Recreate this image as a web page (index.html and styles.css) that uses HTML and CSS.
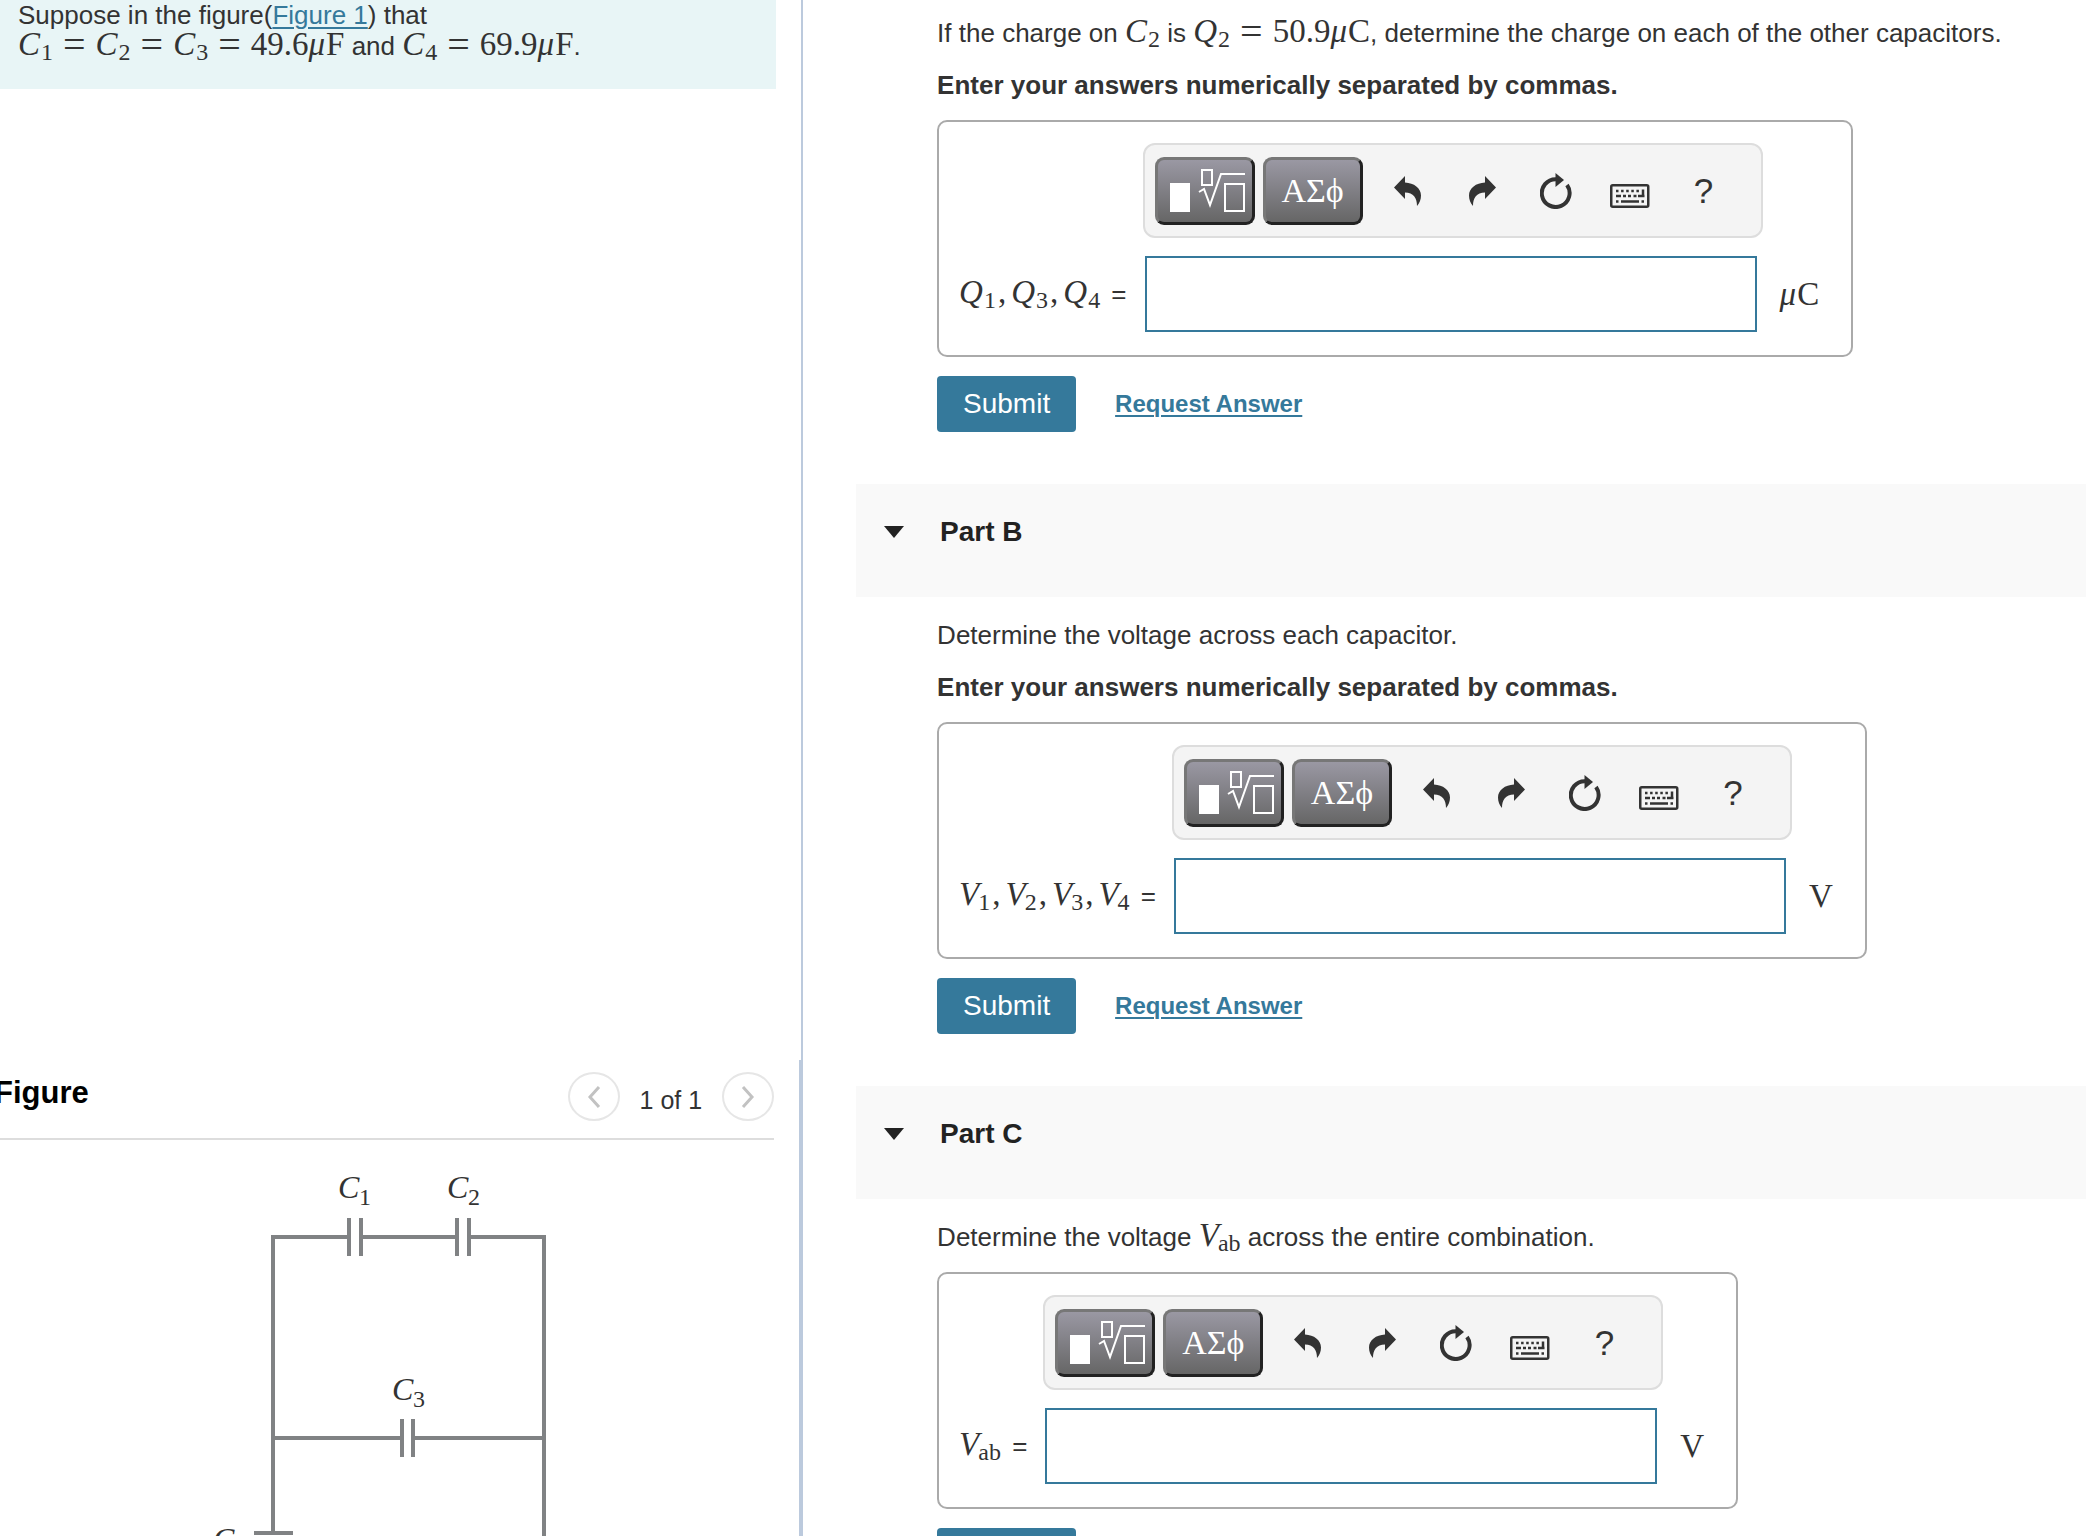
FILE: index.html
```html
<!DOCTYPE html>
<html lang="en">
<head>
<meta charset="utf-8">
<title>Capacitor combination</title>
<link rel="stylesheet" href="styles.css">
</head>
<body>
<svg class="sprite" aria-hidden="true">
  <symbol id="root" viewBox="0 0 76 44">
    <path d="M0 14h20v29H0z" fill="#fff"/>
    <path d="M32 1h10v15H32zM55 15h19v27H55z" fill="none" stroke="#fff" stroke-width="2"/>
    <path d="M29 23l5-3 6 16L51 5h24" fill="none" stroke="#fff" stroke-width="2"/>
  </symbol>
  <symbol id="undo" viewBox="0 0 28 30">
    <path d="M0 11.500L11 0v6.500c9 .5 16 5.500 16 13 0 4-1.500 7.500-4 10.500 0-8-3.500-13.500-12-13.500V23z"/>
  </symbol>
  <symbol id="redo" viewBox="0 0 28 30">
    <path d="M28 11.500L17 0v6.500C8 7 1 12 1 19.500 1 23.500 2.500 27 5 30c0-8 3.500-13.500 12-13.500V23z"/>
  </symbol>
  <symbol id="reset" viewBox="0 0 32 36">
    <path d="M27 12A13.900 13.900 0 1 1 16 6.200" fill="none" stroke="#333" stroke-width="4"/>
    <path d="M15.500 0v14L24 7z"/>
  </symbol>
  <symbol id="keyboard" viewBox="0 0 40 24">
    <rect x="1.250" y="1.250" width="37" height="21.500" rx="1.500" fill="#f4f4f4" stroke="#333" stroke-width="2.500"/>
    <path d="M6 7h23" stroke="#333" stroke-width="2.500" stroke-dasharray="2.500 2.600"/>
    <path d="M6 12h5M13 12h3M18 12h3M23.500 12h3M28 12h6.500M33 5.500V13M6 17.500h2.500M11 17.500h18M31.500 17.500H34" fill="none" stroke="#333" stroke-width="2.500"/>
  </symbol>
</svg>

<div class="page">
  <aside class="left">
    <section class="intro">
      <p class="given">Suppose in the figure(<a href="#figure">Figure 1</a>) that<br>
        <span class="m"><i>C</i><sub>1</sub><b>=</b><i>C</i><sub>2</sub><b>=</b><i>C</i><sub>3</sub><b>=</b>49.6<i>μ</i>F</span> and <span class="m"><i>C</i><sub>4</sub><b>=</b>69.9<i>μ</i>F</span>.</p>
    </section>
    <section class="figure" id="figure">
      <header class="figure-head">
        <h2>Figure</h2>
        <nav class="pager">
          <button type="button" aria-label="Previous figure"><svg viewBox="0 0 14 24"><path d="M12 2L3 12l9 10"/></svg></button>
          <span>1 of 1</span>
          <button type="button" aria-label="Next figure"><svg viewBox="0 0 14 24"><path d="M2 2l9 10-9 10"/></svg></button>
        </nav>
      </header>
      <svg class="circuit" viewBox="0 0 776 560" role="img" aria-label="Capacitor circuit">
        <g class="wire">
          <path d="M273 391V97h76M361 97h96M469 97h75v460M273 298h129M413 298h131"/>
          <path d="M349 78v38M361 78v38M457 78v38M469 78v38M402 279v38M413 279v38M254 393h39M254 404h39M273 404v153"/>
        </g>
        <text x="338" y="58">C</text><text class="n" x="359" y="65">1</text>
        <text x="447" y="58">C</text><text class="n" x="468" y="65">2</text>
        <text x="392" y="260">C</text><text class="n" x="413" y="267">3</text>
        <text x="213" y="410">C</text><text class="n" x="234" y="418">4</text>
      </svg>
    </section>
  </aside>

  <main class="right">
    <section class="part">
      <p>If the charge on <span class="m"><i>C</i><sub>2</sub></span> is <span class="m"><i>Q</i><sub>2</sub><b>=</b>50.9<i>μ</i>C</span>, determine the charge on each of the other capacitors.</p>
      <p><strong>Enter your answers numerically separated by commas.</strong></p>
      <div class="answer">
        <div class="toolbar">
          <button type="button" class="key" aria-label="Templates"><svg><use href="#root"/></svg></button>
          <button type="button" class="key">ΑΣϕ</button>
          <button type="button" class="tool" aria-label="Undo"><svg class="arrow"><use href="#undo"/></svg></button>
          <button type="button" class="tool" aria-label="Redo"><svg class="arrow"><use href="#redo"/></svg></button>
          <button type="button" class="tool" aria-label="Reset"><svg class="reset"><use href="#reset"/></svg></button>
          <button type="button" class="tool" aria-label="Keyboard"><svg class="keyboard"><use href="#keyboard"/></svg></button>
          <button type="button" class="tool">?</button>
        </div>
        <label for="a"><span class="m"><i>Q</i><sub>1</sub><u>,</u><i>Q</i><sub>3</sub><u>,</u><i>Q</i><sub>4</sub></span> =</label>
        <input id="a" type="text">
        <span class="m unit"><i>μ</i>C</span>
      </div>
      <div class="actions"><button type="button" class="submit">Submit</button><a href="#a">Request Answer</a></div>
    </section>

    <h2 class="part-head"><span class="caret"></span>Part B</h2>
    <section class="part">
      <p>Determine the voltage across each capacitor.</p>
      <p><strong>Enter your answers numerically separated by commas.</strong></p>
      <div class="answer">
        <div class="toolbar">
          <button type="button" class="key" aria-label="Templates"><svg><use href="#root"/></svg></button>
          <button type="button" class="key">ΑΣϕ</button>
          <button type="button" class="tool" aria-label="Undo"><svg class="arrow"><use href="#undo"/></svg></button>
          <button type="button" class="tool" aria-label="Redo"><svg class="arrow"><use href="#redo"/></svg></button>
          <button type="button" class="tool" aria-label="Reset"><svg class="reset"><use href="#reset"/></svg></button>
          <button type="button" class="tool" aria-label="Keyboard"><svg class="keyboard"><use href="#keyboard"/></svg></button>
          <button type="button" class="tool">?</button>
        </div>
        <label for="b"><span class="m v"><i>V</i><sub>1</sub><u>,</u><i>V</i><sub>2</sub><u>,</u><i>V</i><sub>3</sub><u>,</u><i>V</i><sub>4</sub></span> =</label>
        <input id="b" type="text">
        <span class="m unit">V</span>
      </div>
      <div class="actions"><button type="button" class="submit">Submit</button><a href="#b">Request Answer</a></div>
    </section>

    <h2 class="part-head"><span class="caret"></span>Part C</h2>
    <section class="part">
      <p>Determine the voltage <span class="m v"><i>V</i><sub>ab</sub></span> across the entire combination.</p>
      <div class="answer">
        <div class="toolbar">
          <button type="button" class="key" aria-label="Templates"><svg><use href="#root"/></svg></button>
          <button type="button" class="key">ΑΣϕ</button>
          <button type="button" class="tool" aria-label="Undo"><svg class="arrow"><use href="#undo"/></svg></button>
          <button type="button" class="tool" aria-label="Redo"><svg class="arrow"><use href="#redo"/></svg></button>
          <button type="button" class="tool" aria-label="Reset"><svg class="reset"><use href="#reset"/></svg></button>
          <button type="button" class="tool" aria-label="Keyboard"><svg class="keyboard"><use href="#keyboard"/></svg></button>
          <button type="button" class="tool">?</button>
        </div>
        <label for="c"><span class="m v"><i>V</i><sub>ab</sub></span> =</label>
        <input id="c" type="text">
        <span class="m unit">V</span>
      </div>
      <div class="actions"><button type="button" class="submit">Submit</button><a href="#c">Request Answer</a></div>
    </section>
  </main>
</div>
</body>
</html>
```
FILE: styles.css
```css
* { box-sizing: border-box; }
body {
  margin: 0;
  font: 26px/30px "Liberation Sans", Arial, sans-serif;
  color: #333;
  background: #fff;
}
h2, p { margin: 0; }
a { color: #35799b; text-underline-offset: 3px; text-decoration-thickness: 2px; }
button, input { font: inherit; color: inherit; margin: 0; }
.sprite { display: none; }

.page { display: flex; height: 100vh; overflow: hidden; }
.left { flex: 0 0 38.5%; min-width: 0; display: flex; flex-direction: column; }
.intro { flex: 0 0 69%; padding-right: 25px; border-right: 2px solid #bccadd; }
.given { background: #e8f5f6; padding: 0 18px; height: 89px; line-height: 31px; white-space: nowrap; }

/* inline formulas */
.m { font: 33px/0 "Liberation Serif", "Times New Roman", serif; white-space: nowrap; }
.m i { margin-right: 1px; }
.m sub { font-size: 24px; line-height: 0; vertical-align: -5px; }
.m b { font-size: 40px; font-weight: 400; margin: 0 10px; vertical-align: -3px; }
.m u { text-decoration: none; margin: 0 5px 0 2px; }
.m.v i { margin-right: -1px; }

.figure { flex: 1; min-height: 0; overflow: hidden; padding-right: 25px; border-right: 4px solid #bccadd; }
.figure-head { display: flex; justify-content: space-between; align-items: center; height: 80px; border-bottom: 2px solid #ddd; }
.figure-head h2 { font-size: 31px; line-height: 36px; color: #000; margin: 0 0 12px -6px; }
.pager { display: flex; align-items: center; gap: 20px; margin-bottom: 4px; }
.pager span { padding-top: 6px; font-size: 25px; }
.pager button { width: 52px; height: 49px; border: 2px solid #e6e6e6; border-radius: 50%; background: #fff; padding: 0; display: grid; place-items: center; }
.pager svg { width: 14px; height: 24px; fill: none; stroke: #c2c2c2; stroke-width: 3; }
.circuit { display: block; width: 776px; }
.circuit text { font: italic 32px "Liberation Serif", serif; fill: #333; }
.circuit .n { font: 24px "Liberation Serif", serif; }
.wire { fill: none; stroke: #808284; stroke-width: 4; }

.right { flex: 1; min-width: 0; overflow: hidden; padding-left: 53px; }
.part { padding: 23px 0 52px 81px; }
.part:first-child { padding-top: 18px; }
.part p { margin-bottom: 22px; white-space: nowrap; }
.part p:has(+ .answer) { margin-bottom: 20px; }
.part-head {
  display: flex; align-items: center; gap: 36px;
  height: 113px; padding: 0 28px 18px;
  background: #f9f9f9; color: #222; font-size: 28px; line-height: 32px;
}
.caret { border: 10px solid transparent; border-top: 12px solid #222; border-bottom: 0; }

.answer {
  display: grid; grid-template-columns: auto 620px auto; align-items: center; row-gap: 18px;
  width: max-content; height: 237px; padding: 21px 32px 23px 20px;
  border: 2px solid #aaa; border-radius: 10px;
}
.toolbar {
  grid-column: 2; display: flex; align-items: center; height: 95px; padding: 0 20px 0 10px;
  background: #f4f4f4; border: 2px solid #ddd; border-radius: 12px;
}
.key {
  width: 100px; height: 68px; margin-right: 8px; padding: 0;
  border: 3px solid; border-color: #777 #222 #222 #777; border-radius: 9px;
  background: linear-gradient(#9a98a3, #666); color: #fff;
  font: 34px/60px "Liberation Serif", serif;
}
.key svg { display: block; width: 76px; height: 44px; margin: 0 0 0 12px; }
.tool { flex: 1; padding: 0; border: 0; background: none; font-size: 35px; display: grid; place-items: center; }
.tool svg { fill: #333; }
.arrow { width: 28px; height: 30px; }
.reset { width: 32px; height: 36px; }
.keyboard { width: 40px; height: 24px; margin-top: 10px; }
.answer label { grid-column: 1; padding-right: 16px; white-space: nowrap; }
.answer label .m { margin-right: 4px; }
.answer input { width: 612px; height: 76px; margin-left: 2px; padding: 0 12px; border: 2px solid #35799b; background: #fff; }
.unit { margin-left: 17px; }
.actions { display: flex; align-items: center; gap: 39px; margin-top: 19px; }
.submit { width: 139px; height: 56px; border: 0; border-radius: 4px; background: #35799b; color: #fff; font-size: 28px; }
.actions a { font-weight: 700; font-size: 24px; }
```
